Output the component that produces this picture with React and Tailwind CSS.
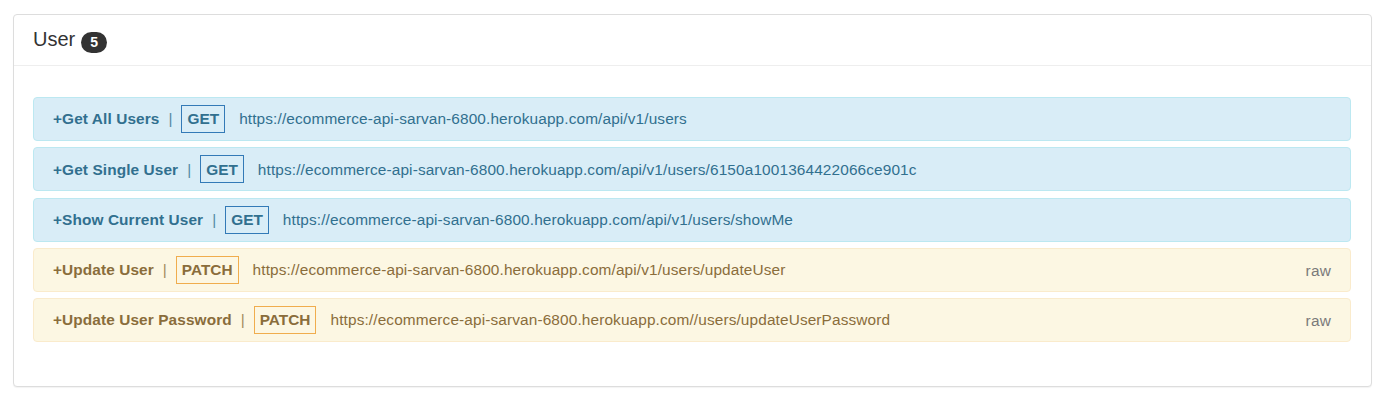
import React from "react";

const rows = [
  { name: "Get All Users", method: "GET", url: "https://ecommerce-api-sarvan-6800.herokuapp.com/api/v1/users", type: "info" },
  { name: "Get Single User", method: "GET", url: "https://ecommerce-api-sarvan-6800.herokuapp.com/api/v1/users/6150a1001364422066ce901c", type: "info" },
  { name: "Show Current User", method: "GET", url: "https://ecommerce-api-sarvan-6800.herokuapp.com/api/v1/users/showMe", type: "info" },
  { name: "Update User", method: "PATCH", url: "https://ecommerce-api-sarvan-6800.herokuapp.com/api/v1/users/updateUser", type: "warn", raw: true },
  { name: "Update User Password", method: "PATCH", url: "https://ecommerce-api-sarvan-6800.herokuapp.com//users/updateUserPassword", type: "warn", raw: true },
];

function Row({ r }) {
  const info = r.type === "info";
  return (
    <div
      className={
        info
          ? "flex items-center h-[44px] rounded-[4px] border border-[#bce8f1] bg-[#d9edf7] text-[#31708f] pl-[19px] pr-[19px]"
          : "flex items-center h-[44px] rounded-[4px] border border-[#faebcc] bg-[#fcf7e3] text-[#8a6d3b] pl-[19px] pr-[19px]"
      }
    >
      <span className="font-bold tracking-[0.1px]">+{r.name}</span>
      <span className="mx-[9px] opacity-80">|</span>
      <span
        className={
          info
            ? "font-bold border border-[#337ab7] h-[28px] flex items-center px-[5px] leading-none"
            : "font-bold border border-[#f0ad4e] h-[28px] flex items-center px-[5px] leading-none"
        }
      >
        {r.method}
      </span>
      <span className="ml-[14px] tracking-[0.12px]">{r.url}</span>
      {r.raw && <span className="ml-auto text-[#7a7a7a] tracking-[0.2px] mt-[2px]">raw</span>}
    </div>
  );
}

export default function App() {
  return (
    <div className="bg-white min-h-[412px] pt-[14px] pl-[13px] pr-[20px]" style={{ fontFamily: '"Liberation Sans", Arial, sans-serif' }}>
      <div className="border border-[#dddddd] rounded-[4px] bg-white shadow-[0_1px_1px_rgba(0,0,0,0.05)] text-[15.4px]">
        <div className="h-[51px] border-b border-[#eeeeee] flex items-center pl-[19px]">
          <span className="text-[20px] text-[#333333] leading-none mb-[2px]">User</span>
          <span className="ml-[6px] mt-[4px] h-[21px] min-w-[26px] px-[8px] rounded-full bg-[#333333] text-white text-[14px] font-bold flex items-center justify-center leading-none">
            5
          </span>
        </div>
        <div className="pt-[31px] pb-[44px] pl-[19px] pr-[20px] flex flex-col gap-[6.25px]">
          {rows.map((r, i) => (
            <Row key={i} r={r} />
          ))}
        </div>
      </div>
    </div>
  );
}
